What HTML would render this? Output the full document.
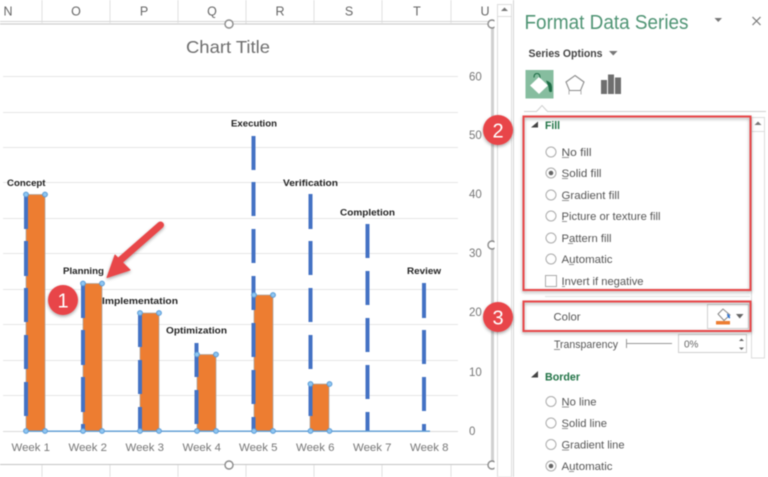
<!DOCTYPE html>
<html><head><meta charset="utf-8">
<style>
html,body{margin:0;padding:0;background:#fff;width:768px;height:477px;overflow:hidden}
svg{display:block;filter:blur(.4px)}
text{font-family:"Liberation Sans",sans-serif}
.l{font-size:9.5px;font-weight:bold;fill:#222}
.w{font-size:11px;fill:#767676}
.y{font-size:11.5px;fill:#767676}
.h{font-size:12.5px;fill:#666;text-anchor:middle}
.p{font-size:11px;fill:#555}
.g{stroke:#e6e6e6;stroke-width:1}
.o{fill:#ed7d31;stroke:#a5a5a5;stroke-width:.7}
.d{fill:#4472c4}
.c{fill:#8ec6f2;stroke:#5b9bd5;stroke-width:1}
.r{fill:#fff;stroke:#ababab;stroke-width:1}
.b{fill:none;stroke:#e8474a;stroke-width:2}
.u{stroke:#666;stroke-width:.7}
</style></head>
<body>
<svg width="768" height="477" viewBox="0 0 768 477" xmlns="http://www.w3.org/2000/svg">
<defs>
<filter id="s" x="-30%" y="-30%" width="160%" height="160%"><feDropShadow dx="0" dy="1.5" stdDeviation="1.5" flood-color="#000" flood-opacity=".35"/></filter>
</defs>
<rect width="768" height="477" fill="#fff"/>

<!-- sheet column header -->
<g stroke="#e0e0e0"><path d="M42 0V23M110 0V23M178 0V23M246 0V24M314 0V23M382 0V23M451 0V23"/></g>
<path d="M0 21.5H492" stroke="#d6d6d6"/><path d="M0 24H492" stroke="#c6c6c6"/>
<text class="h" x="8" y="15.5">N</text><text class="h" x="76" y="15.5">O</text><text class="h" x="144" y="15.5">P</text><text class="h" x="212" y="15.5">Q</text><text class="h" x="280" y="15.5">R</text><text class="h" x="349" y="15.5">S</text><text class="h" x="417" y="15.5">T</text><text class="h" x="485" y="15.5">U</text>

<!-- chart frame -->
<path d="M492.500 24V465" stroke="#d0d0d0" stroke-width="3"/>
<path d="M0 464.5H492" stroke="#c4c4c4" stroke-width="1"/>
<g stroke="#e0e0e0"><path d="M42 465V477M110 465V477M178 465V477M246 465V477M314 465V477M382 465V477M451 465V477"/></g>
<circle cx="229" cy="24" r="4" fill="#fff" stroke="#8a8a8a" stroke-width="1.4"/>
<circle cx="229" cy="465" r="4" fill="#fff" stroke="#8a8a8a" stroke-width="1.4"/>
<circle cx="492" cy="24" r="4" fill="#fff" stroke="#8a8a8a" stroke-width="1.4"/>
<circle cx="492" cy="245" r="4" fill="#fff" stroke="#8a8a8a" stroke-width="1.4"/>
<circle cx="492" cy="465" r="4" fill="#fff" stroke="#8a8a8a" stroke-width="1.4"/>
<rect x="494.500" y="0" width="3" height="477" fill="#fff"/>

<text x="228" y="53" text-anchor="middle" font-size="17.5" fill="#6e6e6e" textLength="84" lengthAdjust="spacingAndGlyphs">Chart Title</text>

<!-- gridlines -->
<g class="g"><path d="M3 76.5H458M3 112.5H458M3 147.5H458M3 182.5H458M3 218.5H458M3 253.5H458M3 289.5H458M3 324.5H458M3 360.5H458M3 395.5H458"/></g>
<path d="M3 431.5H458" stroke="#d9d9d9"/>

<!-- y axis -->
<text class="y" x="469" y="80.5">60</text><text class="y" x="469" y="139">50</text><text class="y" x="469" y="198">40</text><text class="y" x="469" y="257">30</text><text class="y" x="469" y="316">20</text><text class="y" x="469" y="376">10</text><text class="y" x="469" y="435">0</text>

<!-- orange bars -->
<rect class="o" x="26" y="194.5" width="19" height="236.5"/>
<rect class="o" x="83" y="283.5" width="19" height="147.5"/>
<rect class="o" x="140" y="313" width="19" height="118"/>
<rect class="o" x="197" y="354.5" width="19" height="76.5"/>
<rect class="o" x="254" y="295" width="19" height="136"/>
<rect class="o" x="310" y="384" width="19" height="47"/>

<!-- dashes -->
<g class="d">
<rect x="24" y="194" width="4" height="35"/><rect x="24" y="241" width="4" height="35"/><rect x="24" y="288" width="4" height="34"/><rect x="24" y="335" width="4" height="34"/><rect x="24" y="382" width="4" height="34"/>
<rect x="81" y="283" width="4" height="35"/><rect x="81" y="330" width="4" height="35"/><rect x="81" y="377" width="4" height="35"/><rect x="81" y="424" width="4" height="7"/>
<rect x="138" y="313" width="4" height="34"/><rect x="138" y="360" width="4" height="34"/><rect x="138" y="407" width="4" height="24"/>
<rect x="194.500" y="343" width="4" height="34"/><rect x="194.500" y="390" width="4" height="34"/>
<rect x="251.500" y="136" width="4" height="34"/><rect x="251.500" y="182" width="4" height="34"/><rect x="251.500" y="229" width="4" height="34"/><rect x="251.500" y="276" width="4" height="34"/><rect x="251.500" y="323" width="4" height="34"/><rect x="251.500" y="370" width="4" height="34"/><rect x="251.500" y="417" width="4" height="14"/>
<rect x="308.500" y="194" width="4" height="35"/><rect x="308.500" y="241" width="4" height="34"/><rect x="308.500" y="288" width="4" height="34"/><rect x="308.500" y="335" width="4" height="34"/><rect x="308.500" y="383" width="4" height="33"/>
<rect x="365.500" y="224" width="4" height="34"/><rect x="365.500" y="271" width="4" height="34"/><rect x="365.500" y="318" width="4" height="34"/><rect x="365.500" y="365" width="4" height="34"/><rect x="365.500" y="412" width="4" height="19"/>
<rect x="422" y="283" width="4" height="35"/><rect x="422" y="330" width="4" height="34"/><rect x="422" y="377" width="4" height="34"/><rect x="422" y="424" width="4" height="7"/>
</g>

<!-- series axis line -->
<path d="M26 431.200H430" stroke="#5b9bd5" stroke-width="1.300"/>

<!-- handles -->
<g class="c">
<circle cx="26" cy="194.500" r="2.400"/><circle cx="45" cy="194.500" r="2.400"/><circle cx="26" cy="431" r="2.400"/><circle cx="45" cy="431" r="2.400"/>
<circle cx="83" cy="283.500" r="2.400"/><circle cx="102" cy="283.500" r="2.400"/><circle cx="83" cy="431" r="2.400"/><circle cx="102" cy="431" r="2.400"/>
<circle cx="140" cy="313" r="2.400"/><circle cx="159" cy="313" r="2.400"/><circle cx="140" cy="431" r="2.400"/><circle cx="159" cy="431" r="2.400"/>
<circle cx="197" cy="354.500" r="2.400"/><circle cx="216" cy="354.500" r="2.400"/><circle cx="197" cy="431" r="2.400"/><circle cx="216" cy="431" r="2.400"/>
<circle cx="254" cy="295" r="2.400"/><circle cx="273" cy="295" r="2.400"/><circle cx="254" cy="431" r="2.400"/><circle cx="273" cy="431" r="2.400"/>
<circle cx="310.500" cy="384" r="2.400"/><circle cx="329.500" cy="384" r="2.400"/><circle cx="310.500" cy="431" r="2.400"/><circle cx="329.500" cy="431" r="2.400"/>
</g>

<!-- data labels -->
<text class="l" x="7" y="186" textLength="38.500" lengthAdjust="spacingAndGlyphs">Concept</text>
<text class="l" x="63" y="274" textLength="41" lengthAdjust="spacingAndGlyphs">Planning</text>
<text class="l" x="102" y="304" textLength="76" lengthAdjust="spacingAndGlyphs">Implementation</text>
<text class="l" x="166" y="333.500" textLength="61" lengthAdjust="spacingAndGlyphs">Optimization</text>
<text class="l" x="231" y="126.500" textLength="46" lengthAdjust="spacingAndGlyphs">Execution</text>
<text class="l" x="283" y="186" textLength="55" lengthAdjust="spacingAndGlyphs">Verification</text>
<text class="l" x="340" y="215.500" textLength="55" lengthAdjust="spacingAndGlyphs">Completion</text>
<text class="l" x="407" y="274" textLength="34" lengthAdjust="spacingAndGlyphs">Review</text>

<!-- week labels -->
<text class="w" x="11.500" y="451" textLength="38.500" lengthAdjust="spacingAndGlyphs">Week 1</text>
<text class="w" x="68.500" y="451" textLength="38.500" lengthAdjust="spacingAndGlyphs">Week 2</text>
<text class="w" x="125.500" y="451" textLength="38.500" lengthAdjust="spacingAndGlyphs">Week 3</text>
<text class="w" x="182.500" y="451" textLength="38.500" lengthAdjust="spacingAndGlyphs">Week 4</text>
<text class="w" x="239" y="451" textLength="38.500" lengthAdjust="spacingAndGlyphs">Week 5</text>
<text class="w" x="296" y="451" textLength="38.500" lengthAdjust="spacingAndGlyphs">Week 6</text>
<text class="w" x="353" y="451" textLength="38.500" lengthAdjust="spacingAndGlyphs">Week 7</text>
<text class="w" x="410" y="451" textLength="38.500" lengthAdjust="spacingAndGlyphs">Week 8</text>

<!-- sheet scrollbar -->
<rect x="497.500" y="4.500" width="14" height="472.500" fill="#fff" stroke="#dcdcdc"/>
<path d="M497.500 16.500H511.500" stroke="#dcdcdc"/>
<path d="M501 11L504.500 7.500L508 11Z" fill="#777"/>
<path d="M513.500 0V477" stroke="#d4d4d4"/>

<!-- panel header -->
<text x="524.500" y="29" font-size="20" fill="#4f9474" textLength="164" lengthAdjust="spacingAndGlyphs">Format Data Series</text>
<path d="M714.500 18H722L718.250 22Z" fill="#777"/>
<path d="M752.500 17L760.500 25M760.500 17L752.500 25" stroke="#777" stroke-width="1.200"/>
<text x="528.500" y="57" font-size="11" font-weight="bold" fill="#444" textLength="74" lengthAdjust="spacingAndGlyphs">Series Options</text>
<path d="M609 51H617.500L613.250 55.500Z" fill="#777"/>

<!-- tab icons -->
<rect x="525.500" y="70" width="28" height="28.500" fill="#86bd9f"/>
<path d="M534 77.500Q534 73.500 537 73.500Q540 73.500 540 77.500V81" fill="none" stroke="#1f6d47" stroke-width="1.100"/>
<path d="M546 80.500Q552 82 552 87V91.500Q550 93 549 91L548.500 87Z" fill="#1f6d47"/>
<path d="M530 85.500L539 77L548 85.500L539 94Z" fill="#fff"/>
<path d="M575 75.500L584 82L580.500 90.500H569.500L566 82Z" fill="#fff" stroke="#8d8d8d" stroke-width="1.100"/>
<path d="M569 90.500V94.500M581 90.500V94.500" stroke="#b0b0b0"/>
<rect x="601" y="80" width="6" height="14" fill="#6f6f6f"/><rect x="608" y="74.500" width="6" height="19.500" fill="#6f6f6f"/><rect x="615" y="77.500" width="6" height="16.500" fill="#6f6f6f"/>
<path d="M524 111.500H536.500L542 105.500L547.500 111.500H766" fill="none" stroke="#d0d0d0"/>

<!-- panel scrollbar -->
<rect x="751.500" y="117.500" width="13" height="240.500" fill="#fff" stroke="#dcdcdc"/>
<path d="M751.500 131.500H764.500" stroke="#dcdcdc"/>
<path d="M754.500 125L758 121.500L761.500 125Z" fill="#777"/>

<!-- Fill section -->
<path d="M531 127.500H538V121.500Z" fill="#444"/>
<text x="545" y="129" font-size="11" font-weight="bold" fill="#217346" textLength="15" lengthAdjust="spacingAndGlyphs">Fill</text>

<circle class="r" cx="551" cy="152" r="5"/>
<text class="p" x="561.500" y="156" textLength="30" lengthAdjust="spacingAndGlyphs">No fill</text><path class="u" d="M562 157.500H569"/>
<circle class="r" cx="551" cy="173" r="5"/><circle cx="551" cy="173" r="2.300" fill="#666"/>
<text class="p" x="561.500" y="177" textLength="40" lengthAdjust="spacingAndGlyphs">Solid fill</text><path class="u" d="M562 178.500H568"/>
<circle class="r" cx="551" cy="195" r="5"/>
<text class="p" x="561.500" y="199" textLength="58" lengthAdjust="spacingAndGlyphs">Gradient fill</text><path class="u" d="M562 200.500H569"/>
<circle class="r" cx="551" cy="216" r="5"/>
<text class="p" x="561.500" y="220" textLength="99" lengthAdjust="spacingAndGlyphs">Picture or texture fill</text><path class="u" d="M562 221.500H567"/>
<circle class="r" cx="551" cy="238" r="5"/>
<text class="p" x="561.500" y="242" textLength="50" lengthAdjust="spacingAndGlyphs">Pattern fill</text><path class="u" d="M568 243.500H573"/>
<circle class="r" cx="551" cy="259" r="5"/>
<text class="p" x="561.500" y="263" textLength="51" lengthAdjust="spacingAndGlyphs">Automatic</text><path class="u" d="M569 264.500H574"/>
<rect x="545.500" y="275.500" width="11" height="11" fill="#fff" stroke="#ababab"/>
<text class="p" x="561.500" y="285" textLength="82" lengthAdjust="spacingAndGlyphs">Invert if negative</text><path class="u" d="M562 286.500H565"/>

<path d="M545 296.500H750" stroke="#e2e2e2"/>

<!-- Color row -->
<text class="p" x="553.500" y="320.500" textLength="27" lengthAdjust="spacingAndGlyphs">Color</text>
<rect x="707.500" y="304.500" width="41" height="24" fill="#fff" stroke="#d0d0d0"/>
<path d="M718 314L723 309L730 315L724 320.500Z" fill="#fff" stroke="#888"/>
<path d="M727 313.500Q730.500 315 730 318.500Q727 318 727 313.500Z" fill="#2e75d6"/>
<rect x="716" y="321" width="14" height="3.500" fill="#ed7d31"/>
<path d="M736 314H743.500L739.750 318.500Z" fill="#666"/>

<!-- Transparency -->
<text class="p" x="554" y="348" textLength="64" lengthAdjust="spacingAndGlyphs">Transparency</text><path class="u" d="M554 349.500H560"/>
<path d="M626.500 339V348M626.500 343.500H672" stroke="#999"/>
<rect x="678.500" y="334.500" width="68" height="18" fill="#fff" stroke="#cfcfcf"/>
<text x="684" y="347.500" font-size="10" fill="#666">0%</text>
<path d="M739 341L741.500 338.500L744 341ZM739 347.500H744L741.500 350Z" fill="#666"/>

<!-- Border section -->
<path d="M531 377.500H538V371Z" fill="#444"/>
<text x="545" y="380.500" font-size="11" font-weight="bold" fill="#217346" textLength="35" lengthAdjust="spacingAndGlyphs">Border</text>

<circle class="r" cx="551" cy="401.500" r="5"/>
<text class="p" x="561.500" y="405.500" textLength="35" lengthAdjust="spacingAndGlyphs">No line</text><path class="u" d="M562 407H569"/>
<circle class="r" cx="551" cy="423" r="5"/>
<text class="p" x="561.500" y="427" textLength="45.500" lengthAdjust="spacingAndGlyphs">Solid line</text><path class="u" d="M562 428.500H568"/>
<circle class="r" cx="551" cy="444.500" r="5"/>
<text class="p" x="561.500" y="448.500" textLength="63" lengthAdjust="spacingAndGlyphs">Gradient line</text><path class="u" d="M562 450H569"/>
<circle class="r" cx="551" cy="466" r="5"/><circle cx="551" cy="466" r="2.300" fill="#666"/>
<text class="p" x="561.500" y="470" textLength="51" lengthAdjust="spacingAndGlyphs">Automatic</text><path class="u" d="M569 471.500H574"/>

<!-- callouts -->
<rect class="b" x="523.500" y="116.500" width="227" height="173.500" filter="url(#s)"/>
<rect class="b" x="523.500" y="301.500" width="227" height="29.500" filter="url(#s)"/>

<g filter="url(#s)">
<path d="M160.500 225L116 264" stroke="#e8474a" stroke-width="7" stroke-linecap="round" fill="none"/>
<path d="M107 277.500L115 255L130 270Z" fill="#e8474a" stroke="#e8474a" stroke-linejoin="round"/>
</g>
<g filter="url(#s)">
<circle cx="63" cy="300" r="15" fill="#e8444a"/>
<circle cx="498" cy="130" r="15" fill="#e8444a"/>
<circle cx="498" cy="317" r="15" fill="#e8444a"/>
</g>
<text x="63" y="307.500" text-anchor="middle" font-size="20" fill="#fff">1</text>
<text x="498" y="137.500" text-anchor="middle" font-size="20" fill="#fff">2</text>
<text x="498" y="324.500" text-anchor="middle" font-size="20" fill="#fff">3</text>
</svg>
</body></html>
